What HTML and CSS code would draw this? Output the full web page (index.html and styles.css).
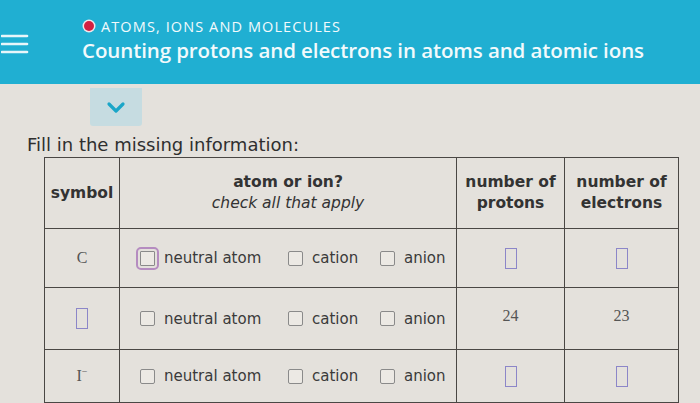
FILE: index.html
```html
<!DOCTYPE html>
<html>
<head>
<meta charset="utf-8">
<link rel="stylesheet" href="styles.css">
</head>
<body>
<header class="topbar">
  <div class="menu">
    <svg width="28" height="20" viewBox="0 0 28 20"><g stroke="#e8f6fa" stroke-width="2.6" stroke-linecap="round"><line x1="1" y1="2" x2="26" y2="2"/><line x1="1" y1="10" x2="26" y2="10"/><line x1="1" y1="18" x2="26" y2="18"/></g></svg>
  </div>
  <div class="titles">
    <div class="crumb"><span class="dot"></span>ATOMS, IONS AND MOLECULES</div>
    <h1>Counting protons and electrons in atoms and atomic ions</h1>
  </div>
</header>
<div class="tabrow">
  <div class="tab"><svg width="20" height="13" viewBox="0 0 20 13"><polyline points="3,3 10,10 17,3" fill="none" stroke="#1aa6c8" stroke-width="3.2" stroke-linecap="round" stroke-linejoin="round"/></svg></div>
</div>
<p class="prompt">Fill in the missing information:</p>
<table class="grid">
  <tr class="head">
    <th class="c-sym">symbol</th>
    <th class="c-kind">atom or ion?<br><em>check all that apply</em></th>
    <th class="c-num">number of<br>protons</th>
    <th class="c-num2">number of<br>electrons</th>
  </tr>
  <tr class="r1">
    <td class="sym">C</td>
    <td class="kind">
      <div class="opts">
        <label class="opt"><span class="box focus"></span>neutral atom</label>
        <label class="opt"><span class="box"></span>cation</label>
        <label class="opt"><span class="box"></span>anion</label>
      </div>
    </td>
    <td class="num"><span class="inp"></span></td>
    <td class="num"><span class="inp"></span></td>
  </tr>
  <tr class="r2">
    <td class="sym"><span class="inp"></span></td>
    <td class="kind">
      <div class="opts">
        <label class="opt"><span class="box"></span>neutral atom</label>
        <label class="opt"><span class="box"></span>cation</label>
        <label class="opt"><span class="box"></span>anion</label>
      </div>
    </td>
    <td class="num val">24</td>
    <td class="num val">23</td>
  </tr>
  <tr class="r3">
    <td class="sym">I<sup>−</sup></td>
    <td class="kind">
      <div class="opts">
        <label class="opt"><span class="box"></span>neutral atom</label>
        <label class="opt"><span class="box"></span>cation</label>
        <label class="opt"><span class="box"></span>anion</label>
      </div>
    </td>
    <td class="num"><span class="inp"></span></td>
    <td class="num"><span class="inp"></span></td>
  </tr>
</table>
</body>
</html>
```

FILE: styles.css
```css
html, body {
  margin: 0;
  padding: 0;
}
body {
  width: 700px;
  height: 403px;
  overflow: hidden;
  background: #e4e1dc;
  font-family: "DejaVu Sans", Verdana, sans-serif;
  color: #333;
}
.topbar {
  height: 84px;
  background: #20afd2;
  display: flex;
  align-items: flex-start;
  box-sizing: border-box;
}
.menu {
  width: 82px;
  padding-top: 34px;
  padding-left: 1px;
  box-sizing: border-box;
}
.titles {
  padding-top: 16px;
  font-family: "Open Sans", sans-serif;
  color: #f2fafc;
}
.crumb {
  display: flex;
  align-items: center;
  gap: 7px;
  font-size: 14.5px;
  letter-spacing: 1.1px;
  margin-left: 1px;
  height: 20px;
}
.dot {
  width: 10px;
  height: 10px;
  border-radius: 50%;
  background: #d31f40;
  box-shadow: 0 0 0 1.5px #f0e6ea;
  margin-left: 1px;
}
h1 {
  margin: 0;
  font-size: 20.5px;
  font-weight: 600;
  letter-spacing: -0.1px;
  line-height: 28px;
}
.tabrow {
  height: 44px;
  padding-left: 90px;
  padding-top: 4px;
  box-sizing: border-box;
}
.tab {
  width: 52px;
  height: 38px;
  background: #c6dce1;
  border-radius: 0 0 3px 3px;
  display: flex;
  align-items: center;
  justify-content: center;
}
.prompt {
  margin: 5px 0 0 27px;
  font-size: 18px;
  line-height: 24px;
  color: #2f2f2f;
}
.grid {
  margin-left: 44px;
  margin-top: 0;
  border-collapse: collapse;
  width: 632px;
  table-layout: fixed;
}
.grid th, .grid td {
  border: 1.5px solid #4a4744;
  padding: 0;
}
.grid th {
  font-size: 15.5px;
  font-weight: bold;
  color: #333;
  line-height: 21px;
  height: 70px;
}
.grid th em {
  font-weight: normal;
  font-style: italic;
}
.c-sym { width: 74px; }
.c-kind { width: 336px; }
.c-num { width: 107px; }
.c-num2 { width: 113px; }
.r1 td { height: 58px; }
.r2 td { height: 55px; }
.r3 td { height: 52px; }
.sym {
  text-align: center;
  font-family: "Liberation Serif", serif;
  font-size: 16px;
  color: #555;
}
.sym sup {
  font-size: 10px;
}
.opts {
  display: flex;
  align-items: center;
  padding-left: 20px;
  font-size: 15px;
  color: #3a3a3a;
}
.opt {
  display: flex;
  align-items: center;
  gap: 9px;
}
.opt:nth-child(1) { width: 148px; }
.opt:nth-child(2) { width: 92px; }
.box {
  width: 13px;
  height: 13px;
  border: 1.3px solid #8a8a8a;
  border-radius: 2px;
  background: #ece9e4;
}
.box.focus {
  outline: 2.5px solid #b58cc0;
  outline-offset: 2px;
  border-radius: 1px;
}
.num {
  text-align: center;
}
.val {
  font-family: "Liberation Serif", serif;
  font-size: 16px;
  color: #555;
  vertical-align: middle;
  padding-bottom: 6px !important;
}
.inp {
  display: inline-block;
  width: 10px;
  height: 19px;
  border: 1.5px solid #8c86c8;
  vertical-align: middle;
}
```
